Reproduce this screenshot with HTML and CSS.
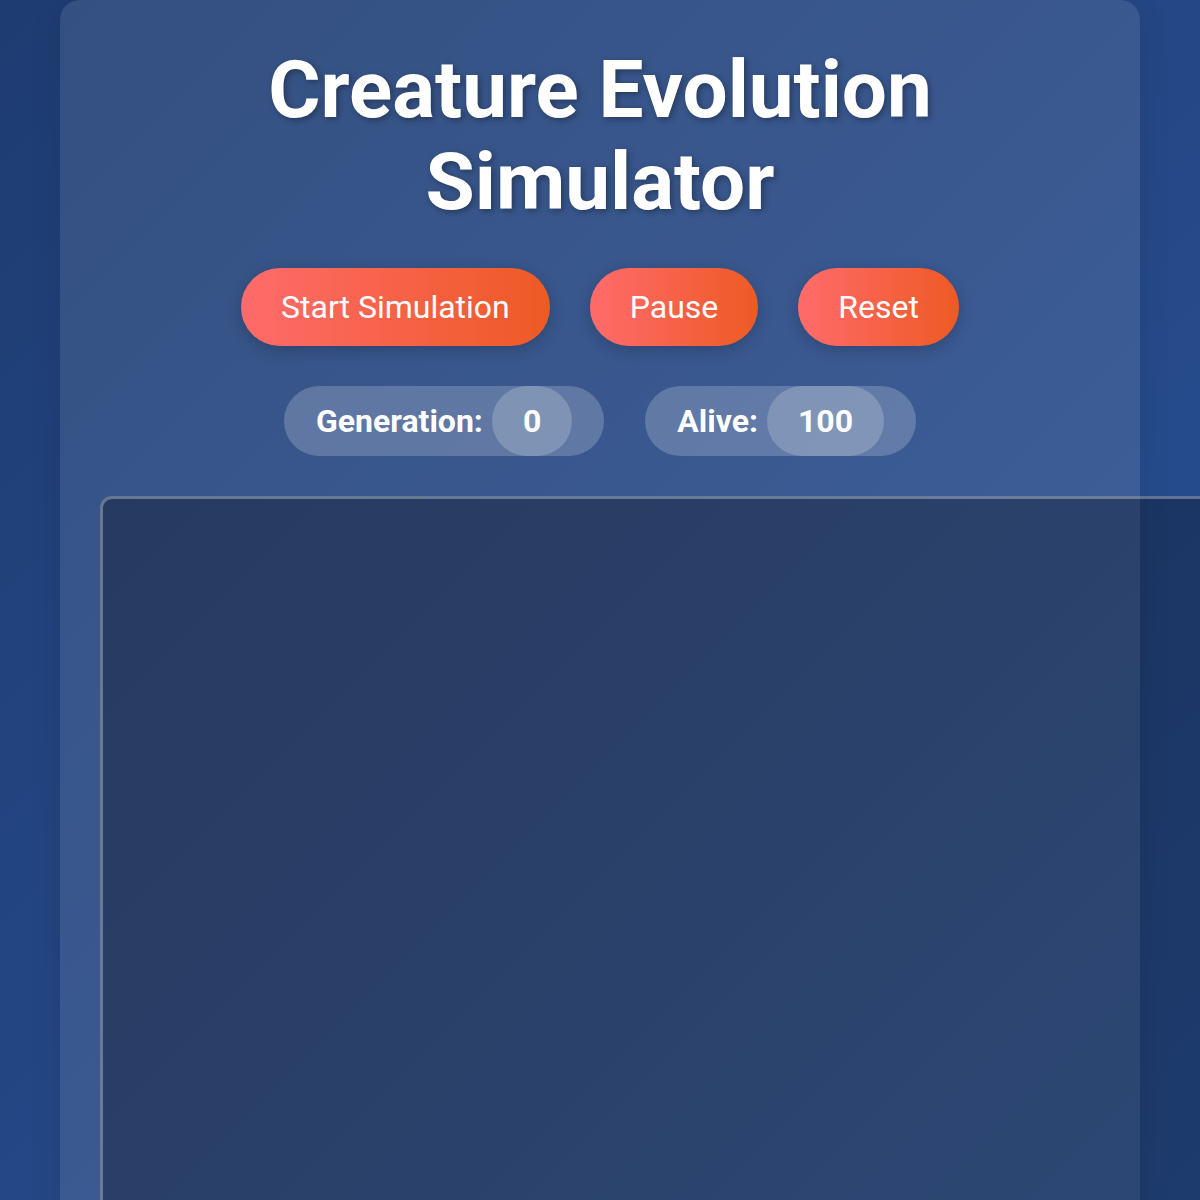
FILE: index.html
```html
<!DOCTYPE html>
<html lang="en">
<head>
    <meta charset="UTF-8">
    <meta name="viewport" content="width=device-width, initial-scale=1.0">
    <title>Creature Evolution Simulator</title>
    <link rel="stylesheet" href="styles.css">
</head>
<body>
<div class="container">
    <h1>Creature Evolution Simulator</h1>

    <div class="controls">
        <button id="startBtn">Start Simulation</button>
        <button id="pauseBtn">Pause</button>
        <button id="resetBtn">Reset</button>
    </div>

    <div class="stats">
        <div class="stat">Generation: <span id="generation" class="stat-value">0</span></div>
        <div class="stat">Alive: <span id="alive" class="stat-value">100</span></div>
    </div>

    <canvas id="world" width="1200" height="800"></canvas>
</div>
</body>
</html>
```

FILE: styles.css
```css
html {
    height: 100%;
}
body {
    font-family: Roboto, 'Liberation Sans', Arial, sans-serif;
    background: linear-gradient(135deg, #1e3c72 0%, #2a5298 100%);
    margin: 0;
    padding: 0;
    min-height: 100%;
    color: white;
}
.container {
    max-width: 1000px;
    margin: 0 auto;
    padding: 44px 40px 40px;
    background-color: rgba(255,255,255,0.1);
    border-radius: 20px;
    box-shadow: 0 8px 32px rgba(0,0,0,0.1);
}
h1 {
    margin: 0 auto 40px;
    max-width: 760px;
    text-align: center;
    font-size: 80px;
    font-weight: 700;
    line-height: 92px;
    text-shadow: 2px 2px 6px rgba(0,0,0,0.35);
}
.controls {
    display: flex;
    justify-content: center;
    gap: 40px;
    margin-bottom: 40px;
}
button {
    background: linear-gradient(90deg, #ff6b6b, #ee5a24);
    color: white;
    border: none;
    border-radius: 50px;
    padding: 20px 40px;
    font-family: inherit;
    font-size: 32px;
    line-height: 38px;
    cursor: pointer;
    box-shadow: 0 4px 15px rgba(0,0,0,0.2);
}
button:hover {
    filter: brightness(1.1);
}
.stats {
    display: flex;
    justify-content: center;
    gap: 41px;
    margin-bottom: 40px;
}
.stat {
    display: flex;
    align-items: center;
    padding: 0 32px;
    background-color: rgba(255,255,255,0.2);
    border-radius: 35px;
    font-size: 32px;
    font-weight: 700;
}
.stat-value {
    margin-left: 9px;
    padding: 16px 31px;
    line-height: 38px;
    background-color: rgba(255,255,255,0.2);
    border-radius: 35px;
}
#world {
    display: block;
    background: linear-gradient(135deg, rgba(0,0,0,0.3), rgba(0,0,0,0.27));
    border: 3px solid rgba(255,255,255,0.3);
    border-radius: 12px;
}
```
